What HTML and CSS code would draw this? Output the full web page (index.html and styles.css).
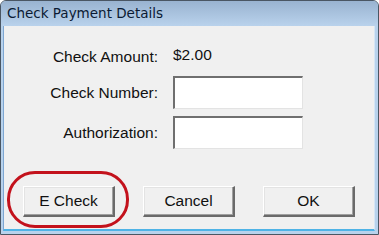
FILE: index.html
```html
<!DOCTYPE html>
<html>
  <head>
    <link rel="stylesheet" href="styles.css">
  </head>
  <body>
    <div class="window">
      <!-- Title bar -->
      <div class="titlebar">Check Payment Details</div>

      <div class="client">
        <div class="fields">
          <div class="label amount-row">Check Amount:</div>
          <div class="value amount-row">$2.00</div>

          <label class="label" for="checkNumber">Check Number:</label>
          <input class="field" type="text" id="checkNumber" />

          <label class="label" for="authorization">Authorization:</label>
          <input class="field" type="text" id="authorization" />
        </div>

        <div class="buttons">
          <!-- Circled button -->
          <div class="highlight">
            <button class="btn">E Check</button>
          </div>
          <button class="btn">Cancel</button>
          <button class="btn">OK</button>
        </div>
      </div>
    </div>
  </body>
</html>
```

FILE: styles.css
```css
html, body {
  margin: 0;
  padding: 0;
  background: #ffffff;
}

.window {
  width: 379px;
  height: 235px;
  box-sizing: border-box;
  display: flex;
  flex-direction: column;
  border: 1px solid #4a5663;
  border-radius: 6px 6px 0 0;
  background: #b8d2ec;
  overflow: hidden;
  font-family: "Liberation Sans", Arial, sans-serif;
}

/* Title bar with the Windows 7 basic gradient */
.titlebar {
  height: 25px;
  flex: none;
  padding-left: 6px;
  line-height: 24px;
  font-family: "DejaVu Sans", sans-serif;
  font-size: 13.5px;
  color: #0b1a33;
  background: linear-gradient(to bottom, #99b3d0, #b9d2ec);
}

.client {
  flex: 1;
  margin: 0 3px 3px 2px;
  background: #f0f0f0;
  border-left: 1px solid #7ea6d1;
  border-right: 1px solid #d6e6f6;
  border-bottom: 2px solid #4fb3e6;
  font-size: 15.5px;
  color: #111111;
}

/* Label / value grid */
.fields {
  display: grid;
  grid-template-columns: 154px 130px;
  grid-template-rows: 24px 33px 33px;
  column-gap: 15px;
  row-gap: 7px;
  padding-top: 19px;
}

.amount-row {
  align-self: start;
  line-height: 20px;
}

.label {
  text-align: right;
  align-self: center;
}

.value {
  align-self: start;
}

.field {
  box-sizing: border-box;
  width: 130px;
  height: 33px;
  margin: 0;
  background: #ffffff;
  border-style: solid;
  border-width: 2px 1px 1px 2px;
  border-color: #6f6f6f #e3e3e3 #e3e3e3 #6f6f6f;
  outline: none;
}

.buttons {
  display: flex;
  gap: 28px;
  padding-left: 19px;
  margin-top: 37px;
}

.btn {
  width: 92px;
  height: 31px;
  margin: 0;
  padding: 0;
  font-family: "Liberation Sans", Arial, sans-serif;
  font-size: 15.5px;
  color: #111111;
  background: #f0f0f0;
  border-style: solid;
  border-width: 1px 2px 2px 1px;
  border-color: #ffffff #6a6a6a #6a6a6a #ffffff;
  box-shadow: inset -1px -1px 0 #a0a0a0, inset 1px 1px 0 #e3e3e3;
}

/* Red marker drawn around the E Check button */
.highlight {
  position: relative;
}

.highlight::after {
  content: "";
  position: absolute;
  top: -15px;
  right: -14px;
  bottom: -11px;
  left: -16px;
  border: 3px solid #c3121c;
  border-radius: 28px;
}
```
